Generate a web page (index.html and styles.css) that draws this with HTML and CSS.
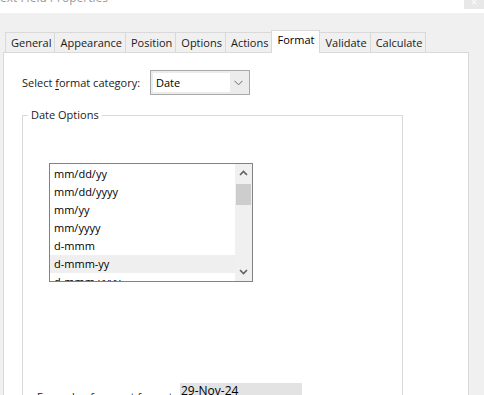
FILE: index.html
```html
<!DOCTYPE html>
<html>
<head>
<meta charset="utf-8">
<link rel="stylesheet" href="styles.css">
</head>
<body>
<div class="titlebar">
  <span class="title">ext Field Properties</span>
  <span class="close">×</span>
</div>
<div class="tabs">
  <div class="tab">General</div>
  <div class="tab">Appearance</div>
  <div class="tab">Position</div>
  <div class="tab">Options</div>
  <div class="tab">Actions</div>
  <div class="tab active">Format</div>
  <div class="tab">Validate</div>
  <div class="tab last">Calculate</div>
</div>
<div class="panel">
  <div class="cat-row">
    <span class="cat-label">Select <u>f</u>ormat category:</span>
    <div class="combo">
      <div class="combo-field">Date</div>
      <div class="combo-arrow">
        <svg width="9" height="6" viewBox="0 0 9 6"><path d="M0.5 0.8 L4.5 4.8 L8.5 0.8" fill="none" stroke="#6a6a6a" stroke-width="1"/></svg>
      </div>
    </div>
  </div>
  <fieldset class="group">
    <legend class="group-title">Date Options</legend>
    <div class="listbox">
      <div class="items">
        <div class="item">mm/dd/yy</div>
        <div class="item">mm/dd/yyyy</div>
        <div class="item">mm/yy</div>
        <div class="item">mm/yyyy</div>
        <div class="item">d-mmm</div>
        <div class="item hover">d-mmm-yy</div>
        <div class="item">d-mmm-yyyy</div>
      </div>
      <div class="scrollbar">
        <svg class="arrow" width="9" height="6" viewBox="0 0 9 6"><path d="M1 5 L4.5 1.5 L8 5" fill="none" stroke="#606060" stroke-width="1.6"/></svg>
        <div class="track"><div class="thumb"></div></div>
        <svg class="arrow" width="9" height="6" viewBox="0 0 9 6"><path d="M1 1 L4.5 4.5 L8 1" fill="none" stroke="#606060" stroke-width="1.6"/></svg>
      </div>
    </div>
    <div class="example-row">
      <span class="example-label">Example of current format:</span>
      <span class="example-value">29-Nov-24</span>
    </div>
  </fieldset>
</div>
</body>
</html>
```
FILE: styles.css
```css
html, body {
  margin: 0;
  padding: 0;
  height: 100%;
  overflow: hidden;
}
body {
  background: #f0f0f0;
  font-family: "Open Sans", "Noto Sans", sans-serif;
  font-size: 11px;
  color: #1a1a1a;
}
.titlebar {
  height: 13px;
  background: #ffffff;
  display: flex;
  justify-content: space-between;
  align-items: flex-start;
  overflow: hidden;
}
.title {
  font-size: 12px;
  line-height: 12px;
  margin-top: -8px;
  color: #9a9a9a;
}
.close {
  width: 20px;
  height: 9px;
  background: #e8e8e8;
  color: #ffffff;
  font-size: 10px;
  line-height: 4px;
  text-align: center;
  overflow: hidden;
}
.tabs {
  display: flex;
  align-items: flex-end;
  margin-top: 17px;
  padding-left: 5px;
  height: 22px;
  position: relative;
  z-index: 1;
}
.tab {
  height: 19px;
  line-height: 19px;
  padding: 0 3px 0 5px;
  border-top: 1px solid #d9d9d9;
  border-left: 1px solid #d9d9d9;
  background: #f0f0f0;
  white-space: nowrap;
}
.tab.last {
  border-right: 1px solid #d9d9d9;
}
.tab.active {
  height: 22px;
  line-height: 17px;
  background: #ffffff;
  border-right: 1px solid #d9d9d9;
  margin-bottom: -1px;
  padding: 0 5px;
  color: #000;
}
.tab.active + .tab {
  border-left: none;
}
.panel {
  margin-left: 3px;
  height: 400px;
  background: #ffffff;
  border: 1px solid #d9d9d9;
  box-sizing: border-box;
  width: 466px;
  padding: 17px 0 0 18px;
}
.cat-row {
  display: flex;
  align-items: center;
}
.cat-label {
  width: 128px;
  color: #1a1a1a;
}
.cat-label u {
  text-decoration-thickness: 1px;
  text-underline-offset: 2px;
}
.combo {
  width: 100px;
  height: 25px;
  box-sizing: border-box;
  border: 1px solid #a8a8a8;
  background: #ececec;
  display: flex;
  align-items: center;
  padding: 2px;
}
.combo-field {
  background: #ffffff;
  width: 77px;
  height: 19px;
  line-height: 19px;
  padding-left: 3px;
  box-sizing: border-box;
  color: #000;
}
.combo-arrow {
  flex: 1;
  display: flex;
  justify-content: center;
  align-items: center;
}
.group {
  margin: 13px 0 0 0;
  width: 381px;
  box-sizing: border-box;
  border: 1px solid #d9d9d9;
  padding: 0 0 0 14px;
  height: 400px;
  min-inline-size: 0;
}
.group-title {
  padding: 0 3px;
  margin-left: -9px;
  color: #1a1a1a;
  line-height: 14px;
}
.listbox {
  margin: 41px 0 0 12px;
  width: 204px;
  height: 119px;
  box-sizing: border-box;
  border: 1px solid #828282;
  display: flex;
  overflow: hidden;
}
.items {
  flex: 1;
  padding: 1px 0 0 0;
}
.item {
  height: 18px;
  line-height: 18px;
  padding-left: 4px;
  color: #000;
}
.item.hover {
  background: #efefef;
}
.scrollbar {
  width: 17px;
  background: #f0f0f0;
  display: flex;
  flex-direction: column;
  align-items: center;
}
.arrow {
  margin: 6px 0;
}
.track {
  flex: 1;
  width: 100%;
  padding-top: 2px;
  box-sizing: border-box;
}
.thumb {
  width: 15px;
  height: 21px;
  margin: 0 auto;
  background: #cdcdcd;
}
.example-row {
  display: flex;
  align-items: flex-start;
  margin-top: 101px;
}
.example-label {
  width: 143px;
  padding-top: 6px;
  color: #1a1a1a;
}
.example-value {
  width: 121px;
  height: 16px;
  background: #e3e3e3;
  font-size: 12px;
  line-height: 14px;
  padding-top: 1px;
  padding-left: 1px;
  color: #000;
}
```
